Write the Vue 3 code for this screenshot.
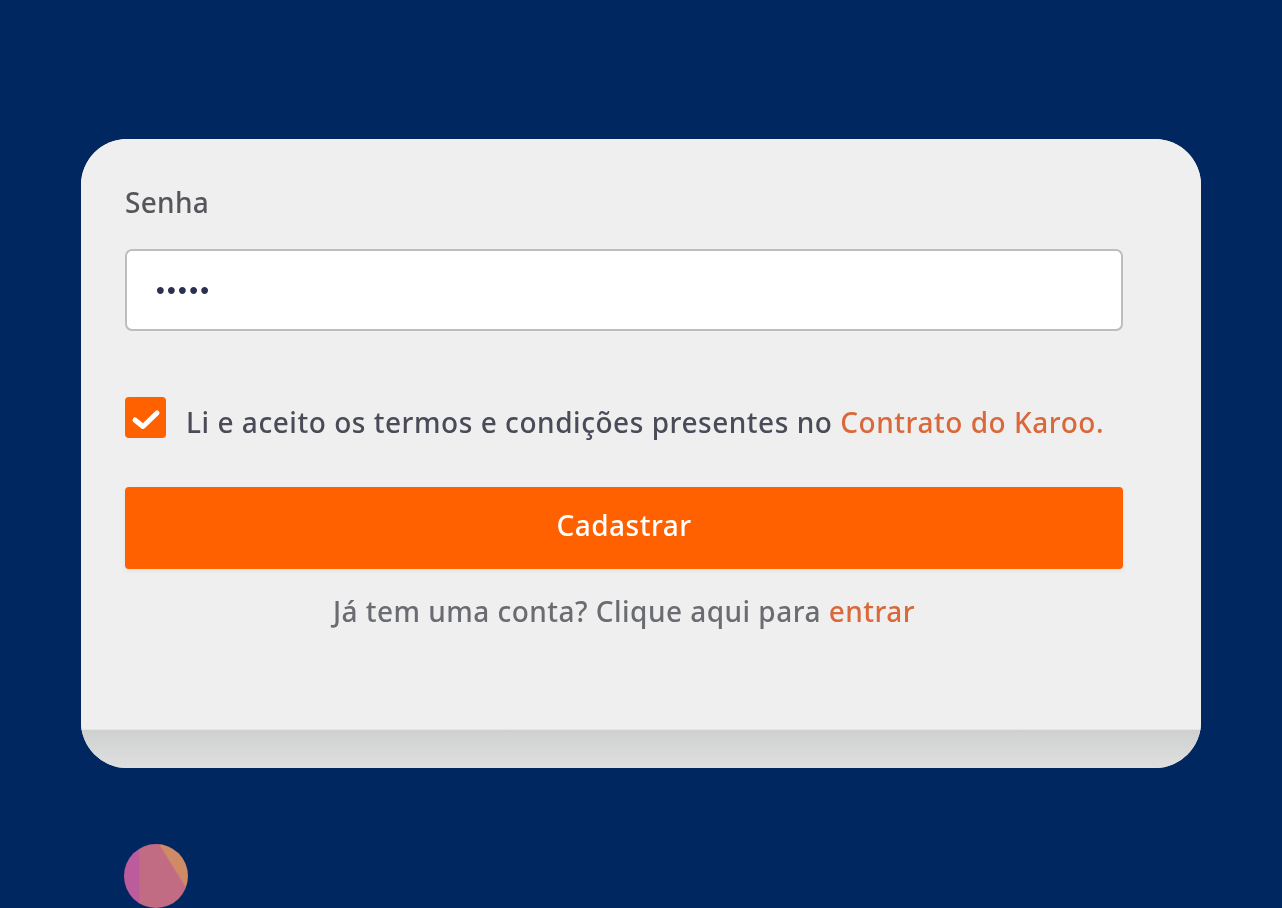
<script setup>
const password = '•••••'
</script>

<template>
  <main class="page">
    <section class="card">
      <div class="face">
        <label class="label">Senha</label>
        <div class="field"><span class="dots">{{ password }}</span></div>
        <div class="terms">
          <span class="check">
            <svg width="41" height="41" viewBox="0 0 41 41" fill="none">
              <path d="M10 23 L18 29.5 L32 16" stroke="#fff" stroke-width="5" stroke-linecap="round" stroke-linejoin="round" />
            </svg>
          </span>
          <p class="terms-text">Li e aceito os termos e condições presentes no <a class="link">Contrato do Karoo.</a></p>
        </div>
        <button class="submit" type="button"><span class="submit-text">Cadastrar</span></button>
        <p class="login">Já tem uma conta? Clique aqui para <a class="link">entrar</a></p>
      </div>
      <div class="edge"></div>
    </section>
    <div class="bubble"></div>
  </main>
</template>

<style>
html, body { margin: 0; background: #012760; }
</style>

<style scoped>
.page {
  box-sizing: border-box;
  width: 1282px;
  height: 908px;
  overflow: hidden;
  padding: 139px 81px 0 81px;
  background: #012760;
  font-family: "Noto Sans", "Open Sans", sans-serif;
  font-weight: 500;
}
.card {
  height: 629px;
  border-radius: 46px;
  overflow: hidden;
  display: flex;
  flex-direction: column;
  background: #efefef;
}
.face {
  box-sizing: border-box;
  height: 591px;
  padding: 46px 78px 0 44px;
  background: #efefef;
  border-bottom: 1px solid #e4e5e4;
}
.label {
  display: block;
  margin-top: -1px;
  padding-bottom: 1px;
  font-size: 28px;
  line-height: 36px;
  color: #55555b;
  letter-spacing: 0.3px;
  filter: blur(0.4px);
}
.field {
  box-sizing: border-box;
  height: 82px;
  margin-top: 28px;
  padding-left: 29px;
  background: #fff;
  border: 2px solid #bdbdbb;
  border-radius: 7px;
  display: flex;
  align-items: center;
}
.dots {
  font-family: "Liberation Sans", sans-serif;
  font-size: 25px;
  color: #2b3050;
  letter-spacing: 2.3px;
  line-height: 1;
  filter: blur(0.4px);
}
.terms {
  display: flex;
  align-items: flex-start;
  margin-top: 66px;
  height: 42px;
}
.check {
  width: 41px;
  height: 41px;
  border-radius: 4px;
  background: #ff6000;
  flex: none;
}
.check svg {
  display: block;
}
.terms-text {
  margin: 7px 0 0 20px;
  font-size: 28px;
  line-height: 36px;
  white-space: nowrap;
  color: #4a4b58;
  letter-spacing: 0.54px;
  filter: blur(0.4px);
}
.link {
  color: #d9683a;
}
.submit {
  display: block;
  width: 100%;
  height: 82px;
  margin-top: 48px;
  padding: 0 0 6px;
  border: 0;
  border-radius: 4px;
  background: #ff6000;
  color: #fff;
  font-family: inherit;
  font-weight: 500;
  font-size: 28px;
  letter-spacing: 0.5px;
  box-shadow: 0 2px 4px rgba(0, 0, 0, 0.06);
}
.submit-text {
  filter: blur(0.4px);
}
.login {
  margin: 24px 0 0;
  text-align: center;
  font-size: 28px;
  line-height: 36px;
  color: #6b6c72;
  letter-spacing: 0.47px;
  filter: blur(0.4px);
}
.edge {
  flex: 1;
  background: linear-gradient(#cfd1d0, #dedfde);
}
.bubble {
  width: 64px;
  height: 64px;
  margin: 76px 0 0 43px;
  border-radius: 50%;
  background:
    linear-gradient(58deg, transparent 71%, #cf8a66 73%),
    linear-gradient(90deg, #bd5c9c 23%, #c26c84 25%);
}
</style>
